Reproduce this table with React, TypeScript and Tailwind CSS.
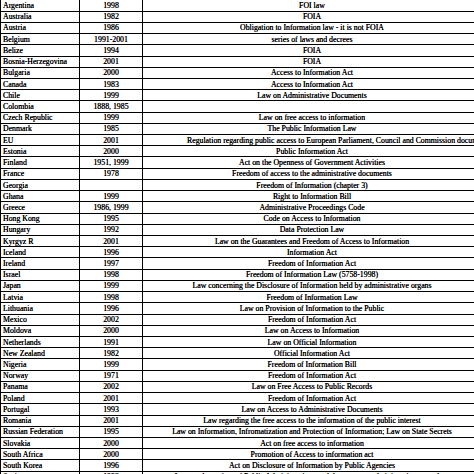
import React from "react";

const rows: [string, string, string][] = [
  ["Argentina", "1998", "FOI law"],
  ["Australia", "1982", "FOIA"],
  ["Austria", "1986", "Obligation to Information law - it is not FOIA"],
  ["Belgium", "1991-2001", "series of laws and decrees"],
  ["Belize", "1994", "FOIA"],
  ["Bosnia-Herzegovina", "2001", "FOIA"],
  ["Bulgaria", "2000", "Access to Information Act"],
  ["Canada", "1983", "Access to Information Act"],
  ["Chile", "1999", "Law on Administrative Documents"],
  ["Colombia", "1888, 1985", ""],
  ["Czech Republic", "1999", "Law on free access to information"],
  ["Denmark", "1985", "The Public Information Law"],
  ["EU", "2001", "Regulation regarding public access to European Parliament, Council and Commission documents"],
  ["Estonia", "2000", "Public Information Act"],
  ["Finland", "1951, 1999", "Act on the Openness of Government Activities"],
  ["France", "1978", "Freedom of access to the administrative documents"],
  ["Georgia", "", "Freedom of Information (chapter 3)"],
  ["Ghana", "1999", "Right to Information Bill"],
  ["Greece", "1986, 1999", "Administrative Proceedings Code"],
  ["Hong Kong", "1995", "Code on Access to Information"],
  ["Hungary", "1992", "Data Protection Law"],
  ["Kyrgyz R", "2001", "Law on the Guarantees and Freedom of Access to Information"],
  ["Iceland", "1996", "Information Act"],
  ["Ireland", "1997", "Freedom of Information Act"],
  ["Israel", "1998", "Freedom of Information Law (5758-1998)"],
  ["Japan", "1999", "Law concerning the Disclosure of Information held by administrative organs"],
  ["Latvia", "1998", "Freedom of Information Law"],
  ["Lithuania", "1996", "Law on Provision of Information to the Public"],
  ["Mexico", "2002", "Freedom of Information Act"],
  ["Moldova", "2000", "Law on Access to Information"],
  ["Netherlands", "1991", "Law on Official Information"],
  ["New Zealand", "1982", "Official Information Act"],
  ["Nigeria", "1999", "Freedom of Information Bill"],
  ["Norway", "1971", "Freedom of Information Act"],
  ["Panama", "2002", "Law on Free Access to Public Records"],
  ["Poland", "2001", "Freedom of Information Act"],
  ["Portugal", "1993", "Law on Access to Administrative Documents"],
  ["Romania", "2001", "Law regarding the free access to the information of the public interest"],
  ["Russian Federation", "1995", "Law on Information, Infromatization and Protection of Information; Law on State Secrets"],
  ["Slovakia", "2000", "Act on free access to information"],
  ["South Africa", "2000", "Promotion of Access to information act"],
  ["South Korea", "1996", "Act on Disclosure of Information by Public Agencies"],
  ["Spain", "1992", "Law on the regime of Public Administrations and the common administrative procedure"],
];

export default function App() {
  return (
    <div className="w-[474px] h-[474px] overflow-hidden bg-white text-black font-['Liberation_Serif',serif] text-[7.8px] leading-[9px] [text-shadow:0_0_0.4px_#000]">
      <div className="-mt-[1.6px] w-[480px] border-t-2 border-black">
        {rows.map(([c, y, l], i) => (
          <div key={i} className="flex h-[11.22px] border-b border-black border-l">
            <div className="w-[79px] shrink-0 border-r border-black pl-[2px] flex items-center whitespace-nowrap overflow-hidden">{c}</div>
            <div className="w-[63px] shrink-0 border-r border-black flex items-center justify-center whitespace-nowrap">{y}</div>
            {c === "EU" ? (
              <div className="w-[338px] shrink-0 flex items-center justify-start pl-[44px] whitespace-nowrap overflow-hidden">{l}</div>
            ) : (
              <div className="w-[338px] shrink-0 flex items-center justify-center whitespace-nowrap">{l}</div>
            )}
          </div>
        ))}
      </div>
    </div>
  );
}
